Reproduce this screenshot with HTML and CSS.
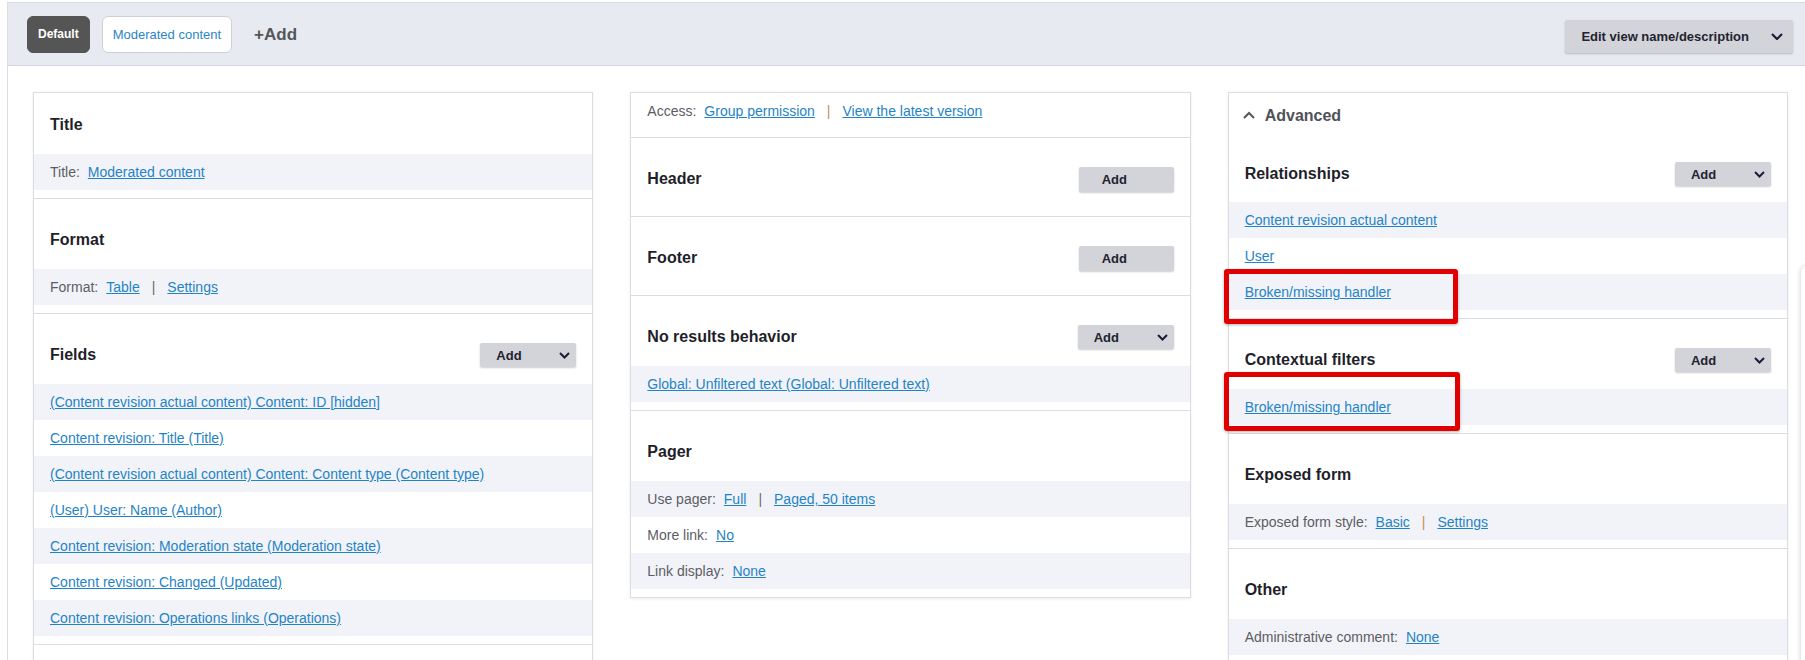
FILE: index.html
```html
<!DOCTYPE html>
<html lang="en">
<head>
<meta charset="utf-8">
<title>Views UI</title>
<link rel="stylesheet" href="styles.css">
</head>
<body>
<div class="page">
  <div class="topbar">
    <div class="tabs">
      <a class="tab tab-active">Default</a>
      <a class="tab">Moderated content</a>
      <a class="tab-add">+Add</a>
    </div>
    <button class="edit-btn"><span>Edit view name/description</span>
      <svg class="chev" width="12" height="7" viewBox="0 0 12 7"><path d="M1 1l5 5 5-5" fill="none" stroke="#1b1d38" stroke-width="2.2"/></svg>
    </button>
  </div>

  <div class="columns">
    <!-- Column 1 -->
    <div class="panel">
      <div class="section first">
        <div class="section-head"><h3>Title</h3></div>
        <div class="rows">
          <div class="row"><span class="label">Title:</span><a>Moderated content</a></div>
        </div>
      </div>
      <div class="section">
        <div class="section-head"><h3>Format</h3></div>
        <div class="rows">
          <div class="row"><span class="label">Format:</span><a>Table</a><span class="pipe">|</span><a>Settings</a></div>
        </div>
      </div>
      <div class="section">
        <div class="section-head"><h3>Fields</h3>
          <button class="add-btn drop"><span>Add</span><svg width="11" height="7" viewBox="0 0 11 7"><path d="M1 1l4.5 4.5L10 1" fill="none" stroke="#1b1d38" stroke-width="2"/></svg></button>
        </div>
        <div class="rows">
          <div class="row"><a>(Content revision actual content) Content: ID [hidden]</a></div>
          <div class="row"><a>Content revision: Title (Title)</a></div>
          <div class="row"><a>(Content revision actual content) Content: Content type (Content type)</a></div>
          <div class="row"><a>(User) User: Name (Author)</a></div>
          <div class="row"><a>Content revision: Moderation state (Moderation state)</a></div>
          <div class="row"><a>Content revision: Changed (Updated)</a></div>
          <div class="row"><a>Content revision: Operations links (Operations)</a></div>
        </div>
      </div>
      <div class="section spacer"></div>
    </div>

    <!-- Column 2 -->
    <div class="panel">
      <div class="section">
        <div class="rows">
          <div class="row plain"><span class="label">Access:</span><a>Group permission</a><span class="pipe pipe-warm">|</span><a>View the latest version</a></div>
        </div>
      </div>
      <div class="section">
        <div class="section-head"><h3>Header</h3><button class="add-btn">Add</button></div>
      </div>
      <div class="section">
        <div class="section-head"><h3>Footer</h3><button class="add-btn">Add</button></div>
      </div>
      <div class="section">
        <div class="section-head"><h3>No results behavior</h3>
          <button class="add-btn drop"><span>Add</span><svg width="11" height="7" viewBox="0 0 11 7"><path d="M1 1l4.5 4.5L10 1" fill="none" stroke="#1b1d38" stroke-width="2"/></svg></button>
        </div>
        <div class="rows">
          <div class="row"><a>Global: Unfiltered text (Global: Unfiltered text)</a></div>
        </div>
      </div>
      <div class="section">
        <div class="section-head"><h3>Pager</h3></div>
        <div class="rows">
          <div class="row"><span class="label">Use pager:</span><a>Full</a><span class="pipe">|</span><a>Paged, 50 items</a></div>
          <div class="row"><span class="label">More link:</span><a>No</a></div>
          <div class="row"><span class="label">Link display:</span><a>None</a></div>
        </div>
      </div>
    </div>

    <!-- Column 3 -->
    <div class="panel annotated">
      <div class="advanced">
        <svg width="12" height="8" viewBox="0 0 12 8"><path d="M1 7l5-5 5 5" fill="none" stroke="#55565b" stroke-width="2"/></svg>
        <span>Advanced</span>
      </div>
      <div class="section rel">
        <div class="section-head"><h3>Relationships</h3>
          <button class="add-btn drop"><span>Add</span><svg width="11" height="7" viewBox="0 0 11 7"><path d="M1 1l4.5 4.5L10 1" fill="none" stroke="#1b1d38" stroke-width="2"/></svg></button>
        </div>
        <div class="rows">
          <div class="row"><a>Content revision actual content</a></div>
          <div class="row"><a>User</a></div>
          <div class="row"><a>Broken/missing handler</a></div>
        </div>
      </div>
      <div class="section">
        <div class="section-head"><h3>Contextual filters</h3>
          <button class="add-btn drop"><span>Add</span><svg width="11" height="7" viewBox="0 0 11 7"><path d="M1 1l4.5 4.5L10 1" fill="none" stroke="#1b1d38" stroke-width="2"/></svg></button>
        </div>
        <div class="rows">
          <div class="row"><a>Broken/missing handler</a></div>
        </div>
      </div>
      <div class="section">
        <div class="section-head"><h3>Exposed form</h3></div>
        <div class="rows">
          <div class="row"><span class="label">Exposed form style:</span><a>Basic</a><span class="pipe pipe-warm">|</span><a>Settings</a></div>
        </div>
      </div>
      <div class="section tail">
        <div class="section-head"><h3>Other</h3></div>
        <div class="rows">
          <div class="row"><span class="label">Administrative comment:</span><a>None</a></div>
        </div>
      </div>
      <div class="highlight hl-1"></div>
      <div class="highlight hl-2"></div>
    </div>
  </div>
  <div class="edge-shadow"></div>
</div>
</body>
</html>
```

FILE: styles.css
```css
* { box-sizing: border-box; }

html, body {
  margin: 0;
  padding: 0;
  background: #ffffff;
}

body {
  font-family: "Liberation Sans", Arial, sans-serif;
  color: #1f2030;
  font-size: 14px;
}

.page {
  position: relative;
  margin: 2px 0 0 7px;
  border-top: 1px solid #dcdde3;
  border-left: 1px solid #dcdde3;
  height: 658px;
  overflow: hidden;
}

/* Top bar */
.topbar {
  display: flex;
  align-items: center;
  justify-content: space-between;
  background: #e8eaf2;
  border-bottom: 1px solid #d6d7de;
  padding: 13px 12px 12px 19px;
}

.tabs {
  display: flex;
  align-items: center;
  gap: 12px;
}

.tab {
  display: block;
  height: 37px;
  line-height: 35px;
  padding: 0 10px;
  border: 1px solid #cfd0d6;
  border-radius: 6px;
  background: #ffffff;
  color: #2b86c6;
  font-size: 13px;
}

.tab-active {
  background: #555555;
  border-color: #555555;
  color: #ffffff;
  font-weight: bold;
  font-size: 12px;
}

.tab-add {
  margin-left: 10px;
  font-size: 17px;
  font-weight: bold;
  color: #55565b;
}

.edit-btn {
  display: flex;
  align-items: center;
  height: 33px;
  margin-top: 3px;
  padding: 0 10px 0 16px;
  border: 0;
  border-radius: 2px;
  background: #d3d4d9;
  box-shadow: 0 1px 2px rgba(0, 0, 0, 0.22);
  font-family: "Liberation Sans", Arial, sans-serif;
  font-size: 13px;
  font-weight: bold;
  color: #222330;
}

.edit-btn .chev { margin-left: 22px; }

/* Columns */
.columns {
  display: grid;
  grid-template-columns: repeat(3, 1fr);
  column-gap: 37px;
  align-items: start;
  padding: 26px 17px 0 25px;
}

.panel {
  position: relative;
  background: #ffffff;
  border: 1px solid #dcdde3;
  box-shadow: 0 1px 3px rgba(0, 0, 0, 0.08);
}

.section {
  border-top: 1px solid #dcdde3;
  padding-bottom: 8px;
}

.section:first-child { border-top: 0; }

.section.spacer { height: 80px; }
.section.tail { padding-bottom: 60px; }

.section-head {
  display: flex;
  align-items: center;
  justify-content: space-between;
  height: 70px;
  padding: 31px 16px 19px;
}

.section.first .section-head {
  height: 61px;
  padding-top: 22px;
  padding-bottom: 19px;
}

.section.rel { border-top: 0; }
.section.rel .section-head {
  height: 65px;
  padding-top: 27px;
  padding-bottom: 18px;
}

h3 {
  margin: 0;
  font-size: 16px;
  line-height: 20px;
  font-weight: bold;
  color: #1f1f2b;
}

.row {
  display: flex;
  align-items: center;
  height: 36px;
  padding: 0 16px;
  font-size: 14px;
  line-height: 20px;
  white-space: nowrap;
}

.rows .row:nth-child(odd) { background: #f2f3f8; }
.rows .row.plain { background: #ffffff; }

.label {
  color: #5c5d64;
  margin-right: 8px;
}

.row a {
  color: #1f84c6;
  text-decoration: underline;
  text-underline-offset: 1px;
}

.pipe {
  color: #6f6a66;
  margin: 0 12px;
}

.pipe-warm { color: #c98a52; }

/* Buttons */
.add-btn {
  display: flex;
  align-items: center;
  width: 95px;
  height: 25px;
  padding: 0 0 0 23px;
  border: 0;
  border-radius: 2px;
  background: #d3d4d9;
  box-shadow: 0 1px 2px rgba(0, 0, 0, 0.2);
  font-family: "Liberation Sans", Arial, sans-serif;
  font-size: 13px;
  font-weight: bold;
  color: #222330;
  flex-shrink: 0;
}

.add-btn.drop {
  width: 96px;
  height: 24px;
  padding: 0 6px 0 16px;
}

.add-btn.drop svg { margin-left: auto; }

/* Advanced toggle */
.advanced {
  display: flex;
  align-items: center;
  gap: 10px;
  height: 44px;
  padding: 12px 16px;
  font-size: 16px;
  line-height: 20px;
  font-weight: bold;
  color: #505159;
}

.advanced span { position: relative; top: 1px; }
.advanced svg { margin-left: -2px; }

/* Annotation highlight boxes */
.highlight {
  position: absolute;
  border: 5px solid #e10000;
  border-radius: 3px;
  box-shadow: 0 1px 3px rgba(0, 0, 0, 0.3);
  pointer-events: none;
}

.hl-1 {
  left: -5px;
  top: 176px;
  width: 234px;
  height: 55px;
}

.hl-2 {
  left: -5px;
  top: 279px;
  width: 236px;
  height: 59px;
}

.edge-shadow {
  position: absolute;
  left: 1793px;
  top: 262px;
  width: 40px;
  height: 500px;
  background: #ffffff;
  border-radius: 8px;
  box-shadow: -1px 0 4px rgba(0, 0, 0, 0.14);
}
```
